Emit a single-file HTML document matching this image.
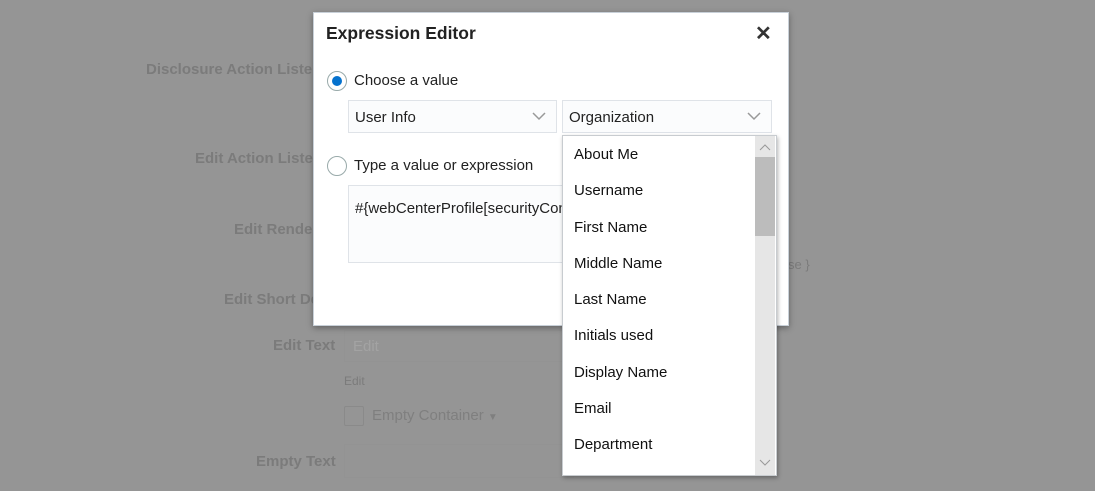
<!DOCTYPE html>
<html><head><style>
body{margin:0;width:1095px;height:491px;background:#959595;font-family:"Liberation Sans",sans-serif;position:relative;overflow:hidden}
.a{position:absolute;white-space:nowrap}
.lbl{color:#7b7b7b;font-weight:bold;font-size:15px}
.dlg{position:absolute;left:313px;top:12px;width:474px;height:312px;background:#fff;border:1px solid #c8d0d8;box-shadow:0 2px 6px rgba(0,0,0,.35)}
.sel{position:absolute;height:33px;border:1px solid #dfe3e8;background:#fbfcfd;box-sizing:border-box;font-size:15px;color:#222;padding:8px 6px}
.chev{position:absolute;right:10px;top:10px}
.dd{position:absolute;left:562px;top:135px;width:213px;height:339px;background:#fff;border:1px solid #c8ccd0;box-shadow:1px 2px 4px rgba(0,0,0,.3);overflow:hidden}
.dd .it{position:absolute;left:11px;font-size:15px;color:#111}
</style></head><body>
<div class="a lbl" style="left:146px;top:61px">Disclosure Action Listener</div>
<div class="a lbl" style="left:195px;top:150px">Edit Action Listener</div>
<div class="a lbl" style="left:234px;top:221px">Edit Rendered</div>
<div class="a lbl" style="left:224px;top:291px">Edit Short Desc</div>
<div class="a lbl" style="left:273px;top:337px">Edit Text</div>
<div class="a lbl" style="left:256px;top:453px">Empty Text</div>
<div class="a" style="left:344px;top:330px;width:230px;height:32px;border:1px solid #939393;box-sizing:border-box;color:#a3a3a3;font-size:15px;padding:7px 8px">Edit</div>
<div class="a" style="left:344px;top:374px;color:#7b7b7b;font-size:12px">Edit</div>
<div class="a" style="left:344px;top:406px;width:18px;height:18px;border:1px solid #8a8a8a;border-radius:2px"></div>
<div class="a" style="left:372px;top:407px;color:#7f7f7f;font-size:15px">Empty Container <span style="font-size:10px">▼</span></div>
<div class="a" style="left:344px;top:444px;width:230px;height:34px;border:1px solid #939393;box-sizing:border-box"></div>
<div class="a" style="left:788px;top:257px;color:#7b7b7b;font-size:13px">se }</div>

<div class="dlg">
<div class="a" style="left:12px;top:10px;font-size:17.5px;font-weight:bold;color:#222">Expression Editor</div>
<div class="a" style="left:441px;top:8px;font-size:20px;font-weight:bold;color:#333">✕</div>
<div class="a" style="left:13px;top:58px;width:18px;height:18px;border:1px solid #9aa;border-radius:50%;background:#fff"><div style="position:absolute;left:4px;top:4px;width:10px;height:10px;border-radius:50%;background:#0572ce"></div></div>
<div class="a" style="left:40px;top:59px;font-size:15px;color:#222">Choose a value</div>
<div class="sel" style="left:34px;top:87px;width:209px">User Info<svg class="chev" width="14" height="10"><path d="M1 2l6 6 6-6" fill="none" stroke="#999" stroke-width="1.5"/></svg></div>
<div class="sel" style="left:248px;top:87px;width:210px">Organization<svg class="chev" width="14" height="10"><path d="M1 2l6 6 6-6" fill="none" stroke="#999" stroke-width="1.5"/></svg></div>
<div class="a" style="left:13px;top:143px;width:18px;height:18px;border:1px solid #9aa;border-radius:50%"></div>
<div class="a" style="left:40px;top:144px;font-size:15px;color:#222">Type a value or expression</div>
<div class="a" style="left:34px;top:172px;width:300px;height:78px;border:1px solid #dfe3e8;background:#fbfcfd;box-sizing:border-box;overflow:hidden;font-size:15px;color:#222;padding:14px 6px">#{webCenterProfile[securityContext</div>
</div>

<div class="dd">
<div class="a" style="left:192px;top:0;width:20px;height:339px;background:#e6e6e6"></div>
<div class="a" style="left:192px;top:21px;width:20px;height:79px;background:#bcbcbc"></div>
<svg class="a" style="left:196px;top:7px" width="12" height="8"><path d="M1 7l5-5 5 5" fill="none" stroke="#999"/></svg>
<svg class="a" style="left:196px;top:323px" width="12" height="8"><path d="M1 1l5 5 5-5" fill="none" stroke="#999"/></svg>
<div class="it" style="top:10px">About Me</div>
<div class="it" style="top:46px">Username</div>
<div class="it" style="top:83px">First Name</div>
<div class="it" style="top:119px">Middle Name</div>
<div class="it" style="top:155px">Last Name</div>
<div class="it" style="top:191px">Initials used</div>
<div class="it" style="top:228px">Display Name</div>
<div class="it" style="top:264px">Email</div>
<div class="it" style="top:300px">Department</div>
</div>
</body></html>
